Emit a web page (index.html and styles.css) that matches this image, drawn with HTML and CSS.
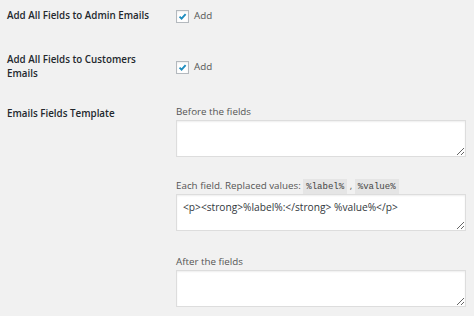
FILE: index.html
```html
<!DOCTYPE html>
<html>
<head>
<meta charset="utf-8">
<link rel="stylesheet" href="styles.css">
</head>
<body>
<div class="form">
  <div class="row row-1">
    <div class="th">Add All Fields to Admin Emails</div>
    <div class="td">
      <label class="check"><span class="box"><svg viewBox="0 0 13 13" width="13" height="13"><path d="M3 6.6 L5.4 9 L10.2 3.6" fill="none" stroke="#1e8cbe" stroke-width="2.2"/></svg></span>Add</label>
    </div>
  </div>
  <div class="row row-2">
    <div class="th">Add All Fields to Customers Emails</div>
    <div class="td">
      <label class="check"><span class="box"><svg viewBox="0 0 13 13" width="13" height="13"><path d="M3 6.6 L5.4 9 L10.2 3.6" fill="none" stroke="#1e8cbe" stroke-width="2.2"/></svg></span>Add</label>
    </div>
  </div>
  <div class="row row-3">
    <div class="th th-3">Emails Fields Template</div>
    <div class="td fields">
      <div class="desc">Before the fields</div>
      <textarea class="ta" spellcheck="false"></textarea>
      <div class="desc desc-gap">Each field. Replaced values: <code>%label%</code> , <code>%value%</code></div>
      <textarea class="ta" spellcheck="false">&lt;p&gt;&lt;strong&gt;%label%:&lt;/strong&gt; %value%&lt;/p&gt;</textarea>
      <div class="desc desc-gap2">After the fields</div>
      <textarea class="ta" spellcheck="false"></textarea>
    </div>
  </div>
</div>
</body>
</html>
```
FILE: styles.css
```css
html, body {
  margin: 0;
  padding: 0;
  background: #f1f1f1;
}
body {
  font-family: "Open Sans", "Noto Sans", sans-serif;
  font-size: 9.8px;
  color: #444;
  width: 474px;
  height: 316px;
  overflow: hidden;
}
.form {
  padding-left: 7px;
}
.row {
  display: flex;
}
.th {
  width: 169px;
  flex: none;
  font-weight: 600;
  color: #23282d;
  line-height: 14px;
  padding-right: 20px;
  box-sizing: border-box;
}
.td {
  flex: 1;
}
.row-1 {
  padding-top: 9px;
  align-items: center;
}
.row-2 {
  padding-top: 30px;
  align-items: center;
}
.row-3 {
  padding-top: 24px;
}
.th-3 {
  padding-top: 2px;
}
.check {
  display: flex;
  align-items: center;
  line-height: 14px;
  color: #555;
}
.box {
  width: 13px;
  height: 13px;
  box-sizing: border-box;
  border: 1px solid #b4b9be;
  background: #fff;
  margin-right: 5px;
  display: flex;
  align-items: center;
  justify-content: center;
  box-shadow: inset 0 1px 2px rgba(0,0,0,.08);
}
.box svg {
  width: 11px;
  height: 11px;
}
.fields {
  display: flex;
  flex-direction: column;
}
.desc {
  line-height: 14px;
  color: #555;
  height: 14px;
  margin-bottom: 1px;
}
.desc-gap {
  margin-top: 22px;
}
.desc-gap2 {
  margin-top: 24px;
}
code {
  font-family: "Liberation Mono", monospace;
  font-size: 9px;
  background: #e5e5e5;
  color: #444;
  padding: 3px 3px;
  line-height: 14px;
}
.ta {
  width: 290px;
  height: 37px;
  box-sizing: border-box;
  border: 1px solid #ddd;
  box-shadow: inset 0 1px 2px rgba(0,0,0,.07);
  background: #fff;
  font-family: "Open Sans", "Noto Sans", sans-serif;
  font-size: 10.2px;
  line-height: 14px;
  color: #32373c;
  padding: 5px 6px;
  margin: 0;
  resize: vertical;
  outline: none;
}
```
